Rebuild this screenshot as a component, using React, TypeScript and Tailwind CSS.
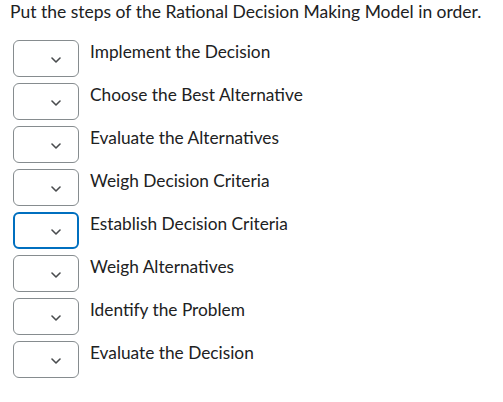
import React from 'react';

const steps = [
  'Implement the Decision',
  'Choose the Best Alternative',
  'Evaluate the Alternatives',
  'Weigh Decision Criteria',
  'Establish Decision Criteria',
  'Weigh Alternatives',
  'Identify the Problem',
  'Evaluate the Decision',
];

function Chevron() {
  return (
    <svg width="10" height="6" viewBox="0 0 10 6" className="text-[#494c4e]">
      <path d="M1 1l4 4 4-4" fill="none" stroke="currentColor" strokeWidth="1.6" strokeLinecap="round" strokeLinejoin="round" />
    </svg>
  );
}

export default function App() {
  return (
    <div className="min-h-screen w-[503px] bg-white text-[#202122] font-['Lato','Liberation_Sans',sans-serif] pl-[10px] pt-[1px]">
      <p className="text-[17.5px] leading-[22px]">Put the steps of the Rational Decision Making Model in order.</p>
      <div className="flex flex-col gap-[6px] mt-[17px] pl-[3px]">
        {steps.map((step, i) => (
          <div key={step} className="flex items-start gap-[11px]">
            <div
              className={
                i === 4
                  ? 'w-[66px] h-[37px] rounded-[6px] border-2 border-[#006fbf] flex items-center justify-end pr-[16px] pt-[2px]'
                  : 'w-[66px] h-[37px] rounded-[6px] border border-[#868c8f] flex items-center justify-end pr-[17px] pt-[2px]'
              }
            >
              <Chevron />
            </div>
            <span className="text-[17.3px] leading-[20px] pt-[2px]">{step}</span>
          </div>
        ))}
      </div>
    </div>
  );
}
